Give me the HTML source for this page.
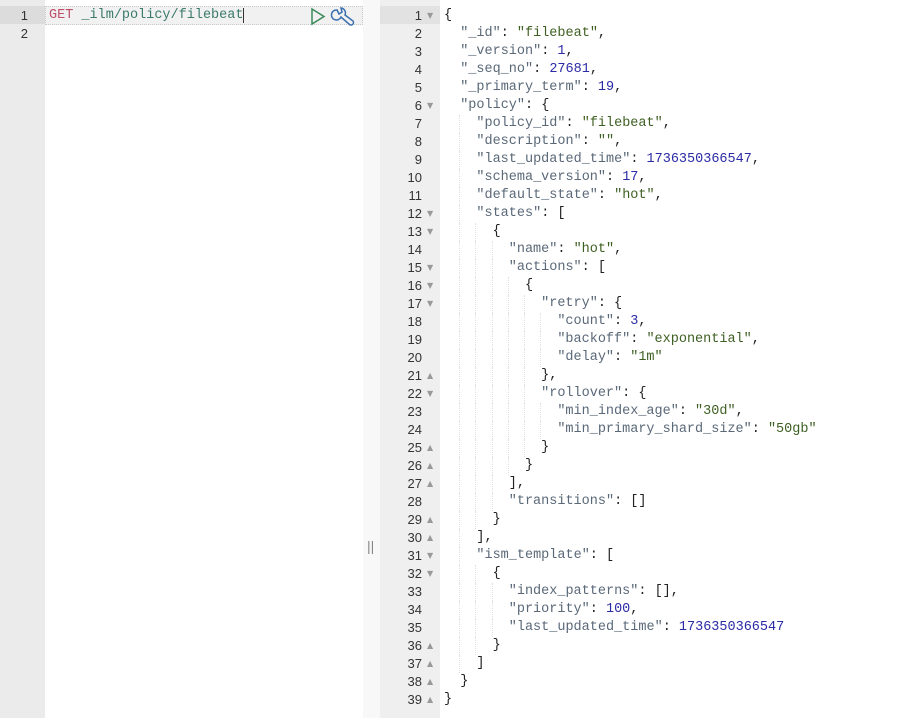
<!DOCTYPE html>
<html><head><meta charset="utf-8"><style>
body{margin:0;width:907px;height:718px;background:#fff;position:relative;overflow:hidden;font-family:"Liberation Mono",monospace;}
.lg{position:absolute;left:0;top:0;width:45px;height:718px;background:#ebebeb;}
.rg{position:absolute;left:380px;top:0;width:60px;height:718px;background:#efefef;}
.sp{position:absolute;left:363px;top:0;width:17px;height:718px;background:#f8f8f8;}
.act{position:absolute;left:45px;top:6px;width:316px;height:17px;background:#f1f1f1;border:1px dotted #c8c8c8;}
.lga{position:absolute;left:0;top:6px;width:45px;height:18px;background:#dcdcdc;}
.rga{position:absolute;left:380px;top:6px;width:60px;height:18px;background:#e2e2e2;}
.n,.f,.c{margin-top:2px;}
.n{position:absolute;font-family:"Liberation Sans",sans-serif;font-size:13px;color:#333;height:18px;line-height:18px;text-align:right;}
.f{position:absolute;left:427px;font-size:8px;color:#999;line-height:18px;height:18px;font-family:"DejaVu Sans",sans-serif;}
.c{position:absolute;left:444px;font-size:13.5px;line-height:18px;height:18px;white-space:pre;color:#222;}
.c i{display:inline-block;width:16.2px;height:18px;vertical-align:top;}
.c i+i{border-left:1px dotted #e0e0e0;margin-left:-1px;}
.k{color:#5a6878}.s{color:#3e5f22}.d{color:#2b2ba6}
</style></head><body>
<div class="lg"></div><div class="lga"></div>
<div class="sp"></div>
<div class="rg"></div><div class="rga"></div>
<div class="act"></div>
<div class="n" style="left:0;width:28px;top:5px">1</div>
<div class="n" style="left:0;width:28px;top:23px">2</div>
<div style="position:absolute;left:49px;top:7px;line-height:18px;font-size:13.5px;white-space:pre"><span style="color:#c0506a">GET</span> <span style="color:#3b7a6a">_ilm/policy/filebeat</span><span style="border-left:1px solid #333"></span></div>
<svg style="position:absolute;left:309px;top:7px" width="50" height="22" viewBox="0 0 50 22">
<path d="M3 2 L15 9.5 L3 17 Z" fill="none" stroke="#3a8a5a" stroke-width="1.5"/>
<path d="M28 3 a5 5 0 1 0 4 7 l8 7 a2.5 2.5 0 0 0 4 -3 l-8 -6 a5 5 0 0 0 -4 -7 l1 4 l-3 2 z" fill="none" stroke="#3a6fb0" stroke-width="1.5"/>
</svg>
<div style="position:absolute;left:367px;top:538px;font-size:14px;color:#888;font-family:'Liberation Sans',sans-serif">||</div>

<div class="n" style="left:380px;width:42px;top:5px">1</div><div class="f" style="top:5px">▼</div><div class="c" style="top:5px">{</div>
<div class="n" style="left:380px;width:42px;top:23px">2</div><div class="c" style="top:23px"><i></i><span class="k">"_id"</span>: <span class="s">"filebeat"</span>,</div>
<div class="n" style="left:380px;width:42px;top:41px">3</div><div class="c" style="top:41px"><i></i><span class="k">"_version"</span>: <span class="d">1</span>,</div>
<div class="n" style="left:380px;width:42px;top:59px">4</div><div class="c" style="top:59px"><i></i><span class="k">"_seq_no"</span>: <span class="d">27681</span>,</div>
<div class="n" style="left:380px;width:42px;top:77px">5</div><div class="c" style="top:77px"><i></i><span class="k">"_primary_term"</span>: <span class="d">19</span>,</div>
<div class="n" style="left:380px;width:42px;top:95px">6</div><div class="f" style="top:95px">▼</div><div class="c" style="top:95px"><i></i><span class="k">"policy"</span>: {</div>
<div class="n" style="left:380px;width:42px;top:113px">7</div><div class="c" style="top:113px"><i></i><i></i><span class="k">"policy_id"</span>: <span class="s">"filebeat"</span>,</div>
<div class="n" style="left:380px;width:42px;top:131px">8</div><div class="c" style="top:131px"><i></i><i></i><span class="k">"description"</span>: <span class="s">""</span>,</div>
<div class="n" style="left:380px;width:42px;top:149px">9</div><div class="c" style="top:149px"><i></i><i></i><span class="k">"last_updated_time"</span>: <span class="d">1736350366547</span>,</div>
<div class="n" style="left:380px;width:42px;top:167px">10</div><div class="c" style="top:167px"><i></i><i></i><span class="k">"schema_version"</span>: <span class="d">17</span>,</div>
<div class="n" style="left:380px;width:42px;top:185px">11</div><div class="c" style="top:185px"><i></i><i></i><span class="k">"default_state"</span>: <span class="s">"hot"</span>,</div>
<div class="n" style="left:380px;width:42px;top:203px">12</div><div class="f" style="top:203px">▼</div><div class="c" style="top:203px"><i></i><i></i><span class="k">"states"</span>: [</div>
<div class="n" style="left:380px;width:42px;top:221px">13</div><div class="f" style="top:221px">▼</div><div class="c" style="top:221px"><i></i><i></i><i></i>{</div>
<div class="n" style="left:380px;width:42px;top:239px">14</div><div class="c" style="top:239px"><i></i><i></i><i></i><i></i><span class="k">"name"</span>: <span class="s">"hot"</span>,</div>
<div class="n" style="left:380px;width:42px;top:257px">15</div><div class="f" style="top:257px">▼</div><div class="c" style="top:257px"><i></i><i></i><i></i><i></i><span class="k">"actions"</span>: [</div>
<div class="n" style="left:380px;width:42px;top:275px">16</div><div class="f" style="top:275px">▼</div><div class="c" style="top:275px"><i></i><i></i><i></i><i></i><i></i>{</div>
<div class="n" style="left:380px;width:42px;top:293px">17</div><div class="f" style="top:293px">▼</div><div class="c" style="top:293px"><i></i><i></i><i></i><i></i><i></i><i></i><span class="k">"retry"</span>: {</div>
<div class="n" style="left:380px;width:42px;top:311px">18</div><div class="c" style="top:311px"><i></i><i></i><i></i><i></i><i></i><i></i><i></i><span class="k">"count"</span>: <span class="d">3</span>,</div>
<div class="n" style="left:380px;width:42px;top:329px">19</div><div class="c" style="top:329px"><i></i><i></i><i></i><i></i><i></i><i></i><i></i><span class="k">"backoff"</span>: <span class="s">"exponential"</span>,</div>
<div class="n" style="left:380px;width:42px;top:347px">20</div><div class="c" style="top:347px"><i></i><i></i><i></i><i></i><i></i><i></i><i></i><span class="k">"delay"</span>: <span class="s">"1m"</span></div>
<div class="n" style="left:380px;width:42px;top:365px">21</div><div class="f" style="top:365px">▲</div><div class="c" style="top:365px"><i></i><i></i><i></i><i></i><i></i><i></i>},</div>
<div class="n" style="left:380px;width:42px;top:383px">22</div><div class="f" style="top:383px">▼</div><div class="c" style="top:383px"><i></i><i></i><i></i><i></i><i></i><i></i><span class="k">"rollover"</span>: {</div>
<div class="n" style="left:380px;width:42px;top:401px">23</div><div class="c" style="top:401px"><i></i><i></i><i></i><i></i><i></i><i></i><i></i><span class="k">"min_index_age"</span>: <span class="s">"30d"</span>,</div>
<div class="n" style="left:380px;width:42px;top:419px">24</div><div class="c" style="top:419px"><i></i><i></i><i></i><i></i><i></i><i></i><i></i><span class="k">"min_primary_shard_size"</span>: <span class="s">"50gb"</span></div>
<div class="n" style="left:380px;width:42px;top:437px">25</div><div class="f" style="top:437px">▲</div><div class="c" style="top:437px"><i></i><i></i><i></i><i></i><i></i><i></i>}</div>
<div class="n" style="left:380px;width:42px;top:455px">26</div><div class="f" style="top:455px">▲</div><div class="c" style="top:455px"><i></i><i></i><i></i><i></i><i></i>}</div>
<div class="n" style="left:380px;width:42px;top:473px">27</div><div class="f" style="top:473px">▲</div><div class="c" style="top:473px"><i></i><i></i><i></i><i></i>],</div>
<div class="n" style="left:380px;width:42px;top:491px">28</div><div class="c" style="top:491px"><i></i><i></i><i></i><i></i><span class="k">"transitions"</span>: []</div>
<div class="n" style="left:380px;width:42px;top:509px">29</div><div class="f" style="top:509px">▲</div><div class="c" style="top:509px"><i></i><i></i><i></i>}</div>
<div class="n" style="left:380px;width:42px;top:527px">30</div><div class="f" style="top:527px">▲</div><div class="c" style="top:527px"><i></i><i></i>],</div>
<div class="n" style="left:380px;width:42px;top:545px">31</div><div class="f" style="top:545px">▼</div><div class="c" style="top:545px"><i></i><i></i><span class="k">"ism_template"</span>: [</div>
<div class="n" style="left:380px;width:42px;top:563px">32</div><div class="f" style="top:563px">▼</div><div class="c" style="top:563px"><i></i><i></i><i></i>{</div>
<div class="n" style="left:380px;width:42px;top:581px">33</div><div class="c" style="top:581px"><i></i><i></i><i></i><i></i><span class="k">"index_patterns"</span>: [],</div>
<div class="n" style="left:380px;width:42px;top:599px">34</div><div class="c" style="top:599px"><i></i><i></i><i></i><i></i><span class="k">"priority"</span>: <span class="d">100</span>,</div>
<div class="n" style="left:380px;width:42px;top:617px">35</div><div class="c" style="top:617px"><i></i><i></i><i></i><i></i><span class="k">"last_updated_time"</span>: <span class="d">1736350366547</span></div>
<div class="n" style="left:380px;width:42px;top:635px">36</div><div class="f" style="top:635px">▲</div><div class="c" style="top:635px"><i></i><i></i><i></i>}</div>
<div class="n" style="left:380px;width:42px;top:653px">37</div><div class="f" style="top:653px">▲</div><div class="c" style="top:653px"><i></i><i></i>]</div>
<div class="n" style="left:380px;width:42px;top:671px">38</div><div class="f" style="top:671px">▲</div><div class="c" style="top:671px"><i></i>}</div>
<div class="n" style="left:380px;width:42px;top:689px">39</div><div class="f" style="top:689px">▲</div><div class="c" style="top:689px">}</div>
</body></html>
